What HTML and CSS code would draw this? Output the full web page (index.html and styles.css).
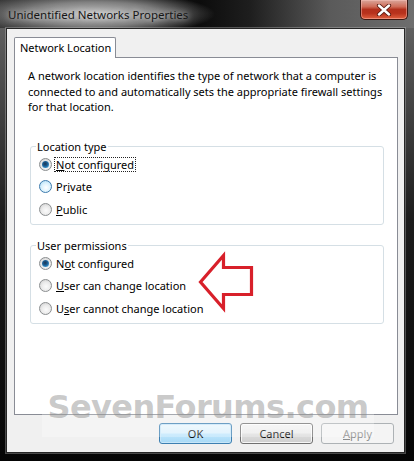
FILE: index.html
```html
<!DOCTYPE html>
<html lang="en">
<head>
  <meta charset="UTF-8" />
  <title>Unidentified Networks Properties</title>
  <link rel="stylesheet" href="styles.css">
</head>
<body>
  <div class="window">
    <div class="titlebar">
      <span class="title">Unidentified Networks Properties</span>
      <div class="close-btn">
        <svg width="16" height="12" viewBox="0 0 16 12">
          <path d="M3 1.5 L13 10.5 M13 1.5 L3 10.5" stroke="#5a1a10" stroke-width="4.2" stroke-linecap="round" />
          <path d="M3 1.5 L13 10.5 M13 1.5 L3 10.5" stroke="#fff" stroke-width="2.4" stroke-linecap="round" />
        </svg>
      </div>
    </div>

    <div class="client">
      <div class="tabs">
        <div class="tab">Network Location</div>
      </div>
      <div class="panel">
        <p class="intro">A network location identifies the type of network that a computer is connected to and automatically sets the appropriate firewall settings for that location.</p>

        <fieldset class="group">
          <legend>Location type</legend>
          <div class="option"><span class="radio checked"></span><span class="label focused"><u>N</u>ot configured</span></div>
          <div class="option"><span class="radio hover"></span><span class="label">Pr<u>i</u>vate</span></div>
          <div class="option"><span class="radio"></span><span class="label"><u>P</u>ublic</span></div>
        </fieldset>

        <fieldset class="group">
          <legend>User permissions</legend>
          <div class="option"><span class="radio checked"></span><span class="label">N<u>o</u>t configured</span></div>
          <div class="option"><span class="radio"></span><span class="label"><u>U</u>ser can change location</span></div>
          <div class="option"><span class="radio"></span><span class="label">U<u>s</u>er cannot change location</span></div>
        </fieldset>
      </div>

      <div class="actions">
        <button class="btn btn-default">OK</button>
        <button class="btn">Cancel</button>
        <button class="btn" disabled><u>A</u>pply</button>
      </div>
    </div>

    <!-- red callout arrow -->
    <svg class="arrow" width="64" height="64" viewBox="0 0 64 64">
      <polygon points="6.5,32 29.5,5.5 29.5,17.5 57.5,17.5 57.5,44.5 29.5,44.5 29.5,58.5" fill="none" stroke="#d8202a" stroke-width="3.2" stroke-linejoin="miter" />
    </svg>

    <div class="watermark">SevenForums.com</div>
  </div>
</body>
</html>
```

FILE: styles.css
```css
body {
  margin: 0;
  background: #000;
  font-family: "Noto Sans", "Open Sans", sans-serif;
  font-size: 11px;
  color: #000;
}

.window {
  position: relative;
  width: 414px;
  height: 461px;
  box-sizing: border-box;
  padding: 0 9px 8px 6px;
  display: flex;
  flex-direction: column;
  background: linear-gradient(to bottom, #6a6a6a 0, #505050 70px, #1c1c1c 220px, #050505 100%);
  overflow: hidden;
}

.titlebar {
  height: 28px;
  flex: none;
  display: flex;
  align-items: flex-start;
  justify-content: space-between;
  margin: 0 -9px 0 -6px;
  padding: 0 6px 0 8px;
  background:
    radial-gradient(ellipse 120px 22px at 95px 14px, rgba(205, 205, 205, 0.95) 0, rgba(165, 165, 165, 0.7) 55%, rgba(80, 80, 80, 0) 100%),
    linear-gradient(90deg, #3a3a3a 0, #0c0c0c 200px, #1e1e1e 250px, #5a5a5a 330px, #6e6e6e 100%);
}

.title {
  line-height: 30px;
  font-size: 11.5px;
  color: #161616;
  text-shadow: 0 0 6px rgba(255, 255, 255, 0.9);
}

.close-btn {
  width: 48px;
  height: 20px;
  box-sizing: border-box;
  border: 1px solid #3b1812;
  border-top: none;
  border-radius: 0 0 5px 5px;
  background: linear-gradient(to bottom, #d9a69b 0, #cf6c58 35%, #b3301c 50%, #b8321d 70%, #e0603f 100%);
  box-shadow: inset 0 0 0 1px rgba(255, 200, 190, 0.45);
  display: flex;
  align-items: center;
  justify-content: center;
}

.client {
  flex: 1;
  display: flex;
  flex-direction: column;
  background: #f0f0f0;
  border: 1px solid #262626;
  box-shadow: 0 0 0 1px rgba(200, 200, 200, 0.35);
  padding: 8px 6px 0 7px;
}

.tabs {
  display: flex;
  height: 20px;
  position: relative;
  z-index: 1;
}

.tab {
  background: #fff;
  border: 1px solid #898c95;
  border-bottom: none;
  border-radius: 2px 2px 0 0;
  padding: 0 4px 0 5px;
  line-height: 20px;
  height: 21px;
  box-sizing: border-box;
  white-space: nowrap;
}

.panel {
  height: 358px;
  box-sizing: border-box;
  background: #fff;
  border: 1px solid #898c95;
  padding: 10px 13px 0 13px;
}

.intro {
  margin: 0 0 24px;
  line-height: 15.5px;
}

.group {
  margin: 0 0 13px 2px;
  padding: 0 0 3px 8px;
  border: 1px solid #d5dfe5;
  border-radius: 3px;
}

.group legend {
  padding: 0 1px;
  margin-left: -3px;
  line-height: 15px;
}

.option {
  display: flex;
  align-items: center;
  height: 23px;
  gap: 3px;
}

.option:first-of-type {
  height: 21px;
}

.radio {
  width: 13px;
  height: 13px;
  box-sizing: border-box;
  border-radius: 50%;
  border: 1px solid #8b8e90;
  background: radial-gradient(circle at 55% 60%, #fbfbfb 0, #ececec 45%, #c9c9c9 100%);
  position: relative;
  flex: none;
}

.radio.hover {
  border-color: #3d7bad;
  background: radial-gradient(circle at 55% 60%, #ffffff 0, #def3fd 45%, #a3d7f3 100%);
}

.radio.checked::after {
  content: "";
  position: absolute;
  inset: 2px;
  border-radius: 50%;
  background: radial-gradient(circle at 45% 40%, #1c3550 0, #1d5c90 40%, #3a97d0 75%, #9ad3f1 100%);
}

.label {
  line-height: 13px;
  padding: 0 1px;
}

.label.focused {
  outline: 1px dotted #222;
  outline-offset: 0;
}

.actions {
  display: flex;
  justify-content: flex-end;
  gap: 8px;
  padding: 8px 4px 0 0;
}

.btn {
  width: 73px;
  height: 21px;
  padding: 0;
  font: inherit;
  color: #000;
  border: 1px solid #707070;
  border-radius: 3px;
  background: linear-gradient(to bottom, #f3f3f3 0, #ebebeb 48%, #dddddd 52%, #cfcfcf 100%);
  box-shadow: inset 0 0 0 1px rgba(255, 255, 255, 0.8);
}

.btn-default {
  border-color: #3c7fb1;
  background: linear-gradient(to bottom, #eaf6fd 0, #d9f0fc 48%, #bee6fd 52%, #a7d9f5 100%);
  box-shadow: inset 0 0 0 1px #c7e6f8;
}

.btn:disabled {
  color: #8a8a8a;
  border-color: #adb2b5;
  background: #f4f4f4;
  box-shadow: none;
}

.arrow {
  position: absolute;
  left: 194px;
  top: 250px;
}

/* site stamp laid over the lower part of the dialog */
.watermark {
  position: absolute;
  left: 42px;
  top: 387px;
  width: 332px;
  height: 50px;
  line-height: 40px;
  text-align: center;
  font-family: "DejaVu Sans", sans-serif;
  font-weight: bold;
  font-size: 32px;
  letter-spacing: -0.6px;
  color: rgba(135, 135, 135, 0.45);
  background: rgba(255, 255, 255, 0.25);
}
```
